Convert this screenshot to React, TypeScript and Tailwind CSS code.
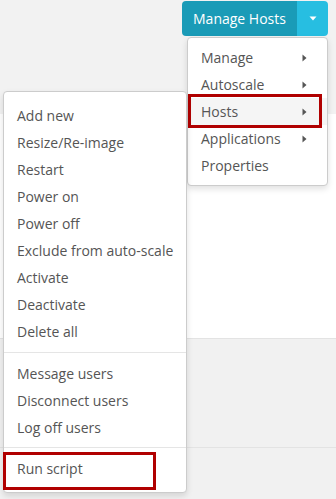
import React from "react";

const hostActions = [
  ["Add new", "Resize/Re-image", "Restart", "Power on", "Power off", "Exclude from auto-scale", "Activate", "Deactivate", "Delete all"],
  ["Message users", "Disconnect users", "Log off users"],
  ["Run script"],
];

const subItems = [
  { label: "Manage", arrow: true },
  { label: "Autoscale", arrow: true },
  { label: "Hosts", arrow: true, active: true },
  { label: "Applications", arrow: true },
  { label: "Properties", arrow: false },
];

function Arrow() {
  return (
    <svg width="5" height="8" viewBox="0 0 5 8" className="fill-[#555555]">
      <path d="M0.5 0.5 L4.5 4 L0.5 7.5 Z" />
    </svg>
  );
}

export default function App() {
  return (
    <div
      className="relative w-[336px] h-[499px] overflow-hidden flex flex-col bg-[#f1f1f1] text-[14px] text-[#555555]"
      style={{ fontFamily: '"Open Sans", "Noto Sans", sans-serif' }}
    >
      {/* header */}
      <div className="h-[114px] shrink-0 bg-[#f2f2f2] flex justify-end items-start pt-[1px] pr-[8px]">
        <div className="relative flex h-[35px] rounded-[4px] overflow-visible">
          <button className="h-full w-[115px] bg-[#1a9bb7] text-white rounded-l-[4px] flex items-center justify-center pb-[1px]">
            Manage Hosts
          </button>
          <button className="h-full w-[31px] bg-[#27bee1] rounded-r-[4px] flex items-center justify-center">
            <svg width="8" height="5" viewBox="0 0 8 5" className="fill-white">
              <path d="M0.5 0.5 L7.5 0.5 L4 4.5 Z" />
            </svg>
          </button>

          {/* submenu */}
          <div className="absolute right-0 top-[36px] w-[141px] bg-white border border-[#cccccc] rounded-[4px] shadow-[0_3px_6px_rgba(0,0,0,0.12)] py-[6px] z-10">
            {subItems.map((it) => (
              <div
                key={it.label}
                className={`relative h-[27px] flex items-center justify-between pl-[13px] pr-[20px] ${it.active ? "bg-[#f5f5f5]" : ""}`}
              >
                <span>{it.label}</span>
                {it.arrow && <Arrow />}
                {it.active && (
                  <div className="absolute left-0 top-[-4px] w-[134px] h-[34px] border-[3px] border-[#b00000]" />
                )}
              </div>
            ))}
          </div>
        </div>
      </div>

      {/* white panel */}
      <div className="h-[225px] shrink-0 bg-white border-b border-[#e3e3e3]" />

      {/* gray area */}
      <div className="h-[109px] shrink-0 border-b border-[#e3e3e3]" />

      {/* host actions menu */}
      <div className="absolute left-[3px] top-[91px] w-[184px] bg-white border border-[#cccccc] rounded-[4px] shadow-[0_3px_6px_rgba(0,0,0,0.12)] py-[10px] z-20">
        {hostActions.map((group, gi) => (
          <div key={gi}>
            {gi === 1 && <div className="h-px bg-[#e5e5e5] my-[7px]" />}
            {gi === 2 && <div className="h-px bg-[#e5e5e5] mt-[6px] mb-[7px]" />}
            {group.map((label) => (
              <div key={label} className="relative h-[27px] flex items-center pl-[13px] whitespace-nowrap">
                {label}
                {label === "Run script" && (
                  <div className="absolute left-[-1px] top-[-3px] w-[153px] h-[38px] border-[3px] border-[#b00000]" />
                )}
              </div>
            ))}
          </div>
        ))}
      </div>
    </div>
  );
}
